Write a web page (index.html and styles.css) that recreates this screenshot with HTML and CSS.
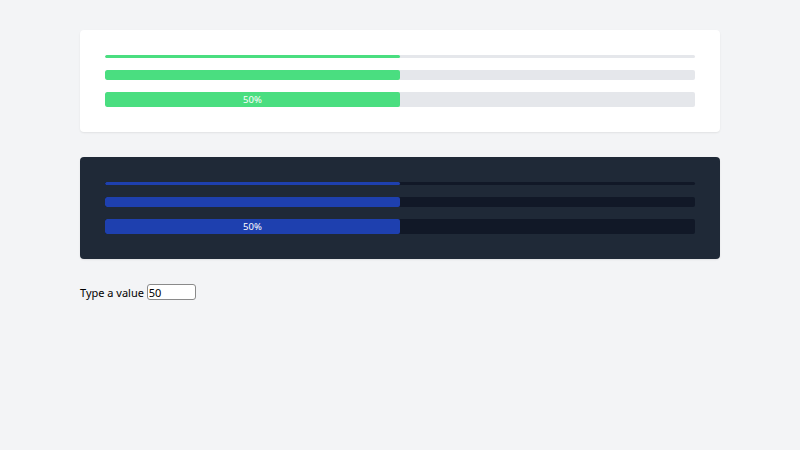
FILE: index.html
```html
<!DOCTYPE html>
<html lang="en">
<head>
  <meta charset="UTF-8" />
  <title>Progress bars</title>
  <link rel="stylesheet" href="styles.css">
</head>
<body>
  <div class="container">
    <div class="card">
      <div class="track thin"><div class="fill" style="width: 50%"></div></div>
      <div class="track medium"><div class="fill" style="width: 50%"></div></div>
      <div class="track large"><div class="fill" style="width: 50%">50%</div></div>
    </div>

    <div class="card dark">
      <div class="track thin"><div class="fill" style="width: 50%"></div></div>
      <div class="track medium"><div class="fill" style="width: 50%"></div></div>
      <div class="track large"><div class="fill" style="width: 50%">50%</div></div>
    </div>

    <label class="value-row">
      Type a value <input type="text" value="50">
    </label>
  </div>
</body>
</html>
```

FILE: styles.css
```css
body {
  margin: 0;
  background-color: #f3f4f6;
  font-family: "Noto Sans", sans-serif;
}

.container {
  width: 640px;
  margin: 30px auto;
}

.card {
  background-color: white;
  border-radius: 4px;
  padding: 25px;
  margin-bottom: 25px;
  box-shadow: 0 1px 2px rgba(0, 0, 0, 0.08);
}

.track {
  background-color: #e5e7eb;
  border-radius: 2px;
  overflow: hidden;
}

.fill {
  height: 100%;
  background-color: #4ade80;
  border-radius: 2px;
  color: white;
  font-size: 9.5px;
  text-align: center;
  line-height: 15px;
}

.thin {
  height: 3px;
  margin-bottom: 12px;
}

.medium {
  height: 10px;
  margin-bottom: 12px;
}

.large {
  height: 15px;
}

.dark {
  background-color: #1f2937;
}

.dark .track {
  background-color: #111827;
}

.dark .fill {
  background-color: #1e40af;
}

.value-row {
  display: block;
  margin-top: 25px;
  font-size: 11px;
  color: #000;
}

.value-row input {
  width: 49px;
  font-family: "Noto Sans", sans-serif;
  font-size: 11px;
  padding: 0 1px;
  height: 16px;
  box-sizing: border-box;
  border: 1px solid #8a8a8a;
  border-radius: 3px;
}
```
